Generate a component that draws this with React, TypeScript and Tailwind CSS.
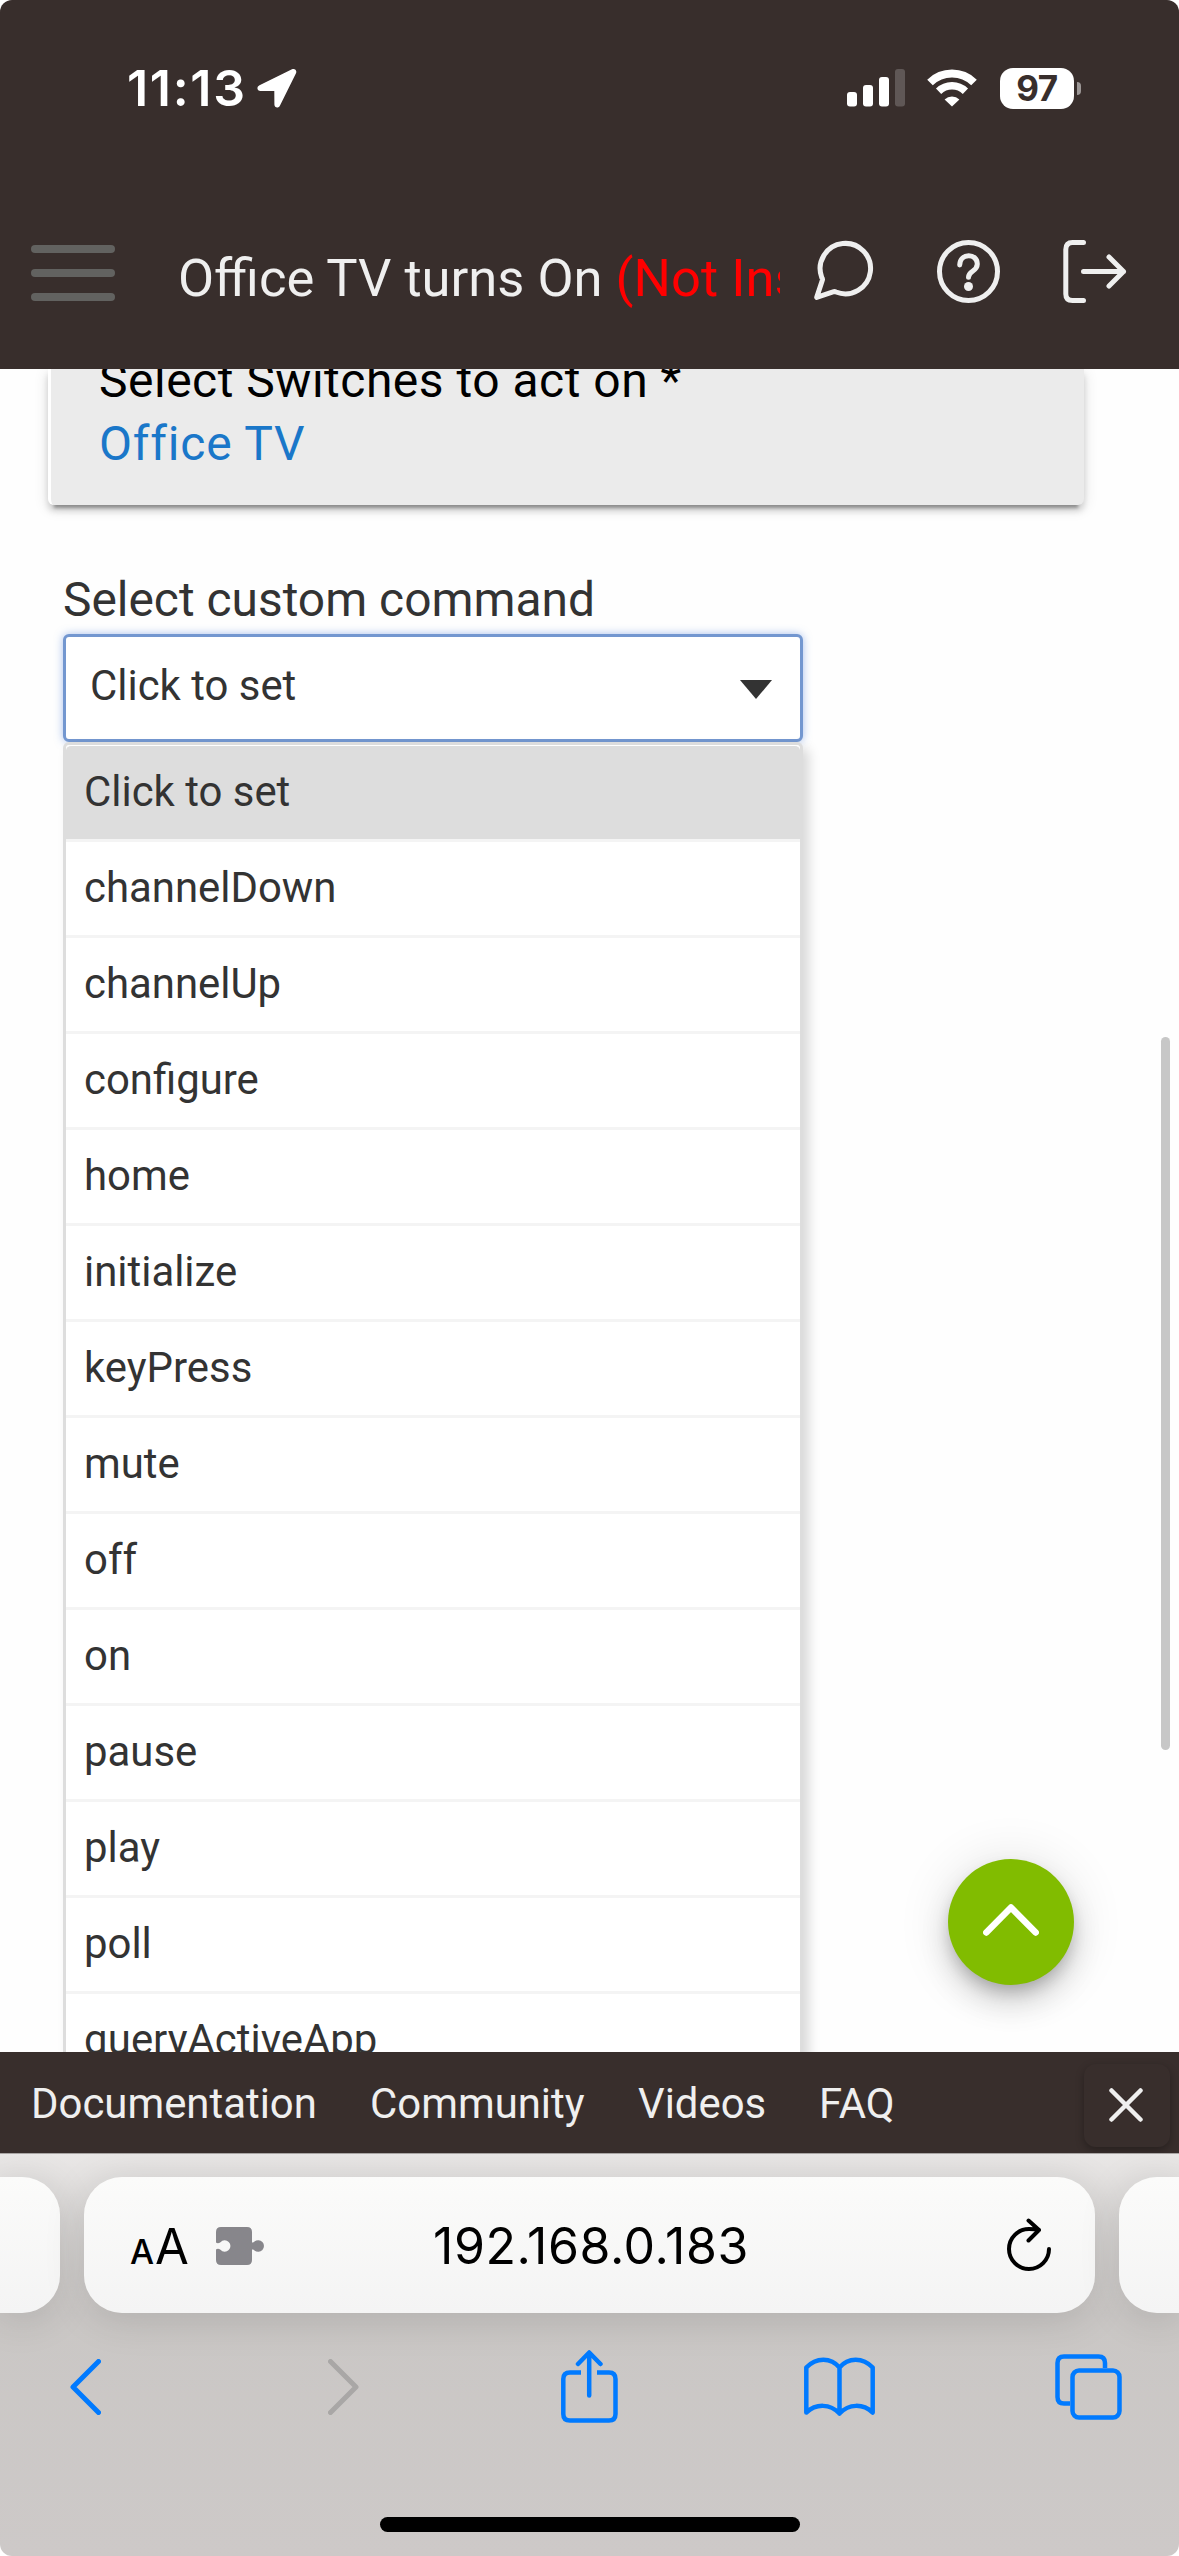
import type { ReactNode } from 'react'

const commands = [
  'Click to set',
  'channelDown',
  'channelUp',
  'configure',
  'home',
  'initialize',
  'keyPress',
  'mute',
  'off',
  'on',
  'pause',
  'play',
  'poll',
  'queryActiveApp',
]

function Icon({
  className,
  viewBox,
  strokeWidth = 5,
  children,
}: {
  className: string
  viewBox: string
  strokeWidth?: number
  children: ReactNode
}) {
  return (
    <svg
      viewBox={viewBox}
      fill="none"
      stroke="currentColor"
      strokeWidth={strokeWidth}
      strokeLinecap="round"
      strokeLinejoin="round"
      className={className}
      aria-hidden="true"
    >
      {children}
    </svg>
  )
}

function StatusBar() {
  return (
    <div className="flex h-[176px] items-center pr-[98px] pl-[127px] font-['Inter'] text-white">
      <span className="text-[50px] leading-none font-semibold tracking-[1.7px]">11:13</span>
      <svg viewBox="0 0 40 40" className="ml-[10px] size-[40px]" aria-hidden="true">
        <path
          d="M35 1.2 2.5 17.2C-.8 18.900 0 23 3.600 23L17.300 23.100 17.400 36.500C17.400 40 21.600 40.600 23 37.500L39 5.200C40.200 2.400 37.800 0 35 1.200Z"
          fill="currentColor"
        />
      </svg>
      <div className="ml-auto flex items-center">
        <svg viewBox="0 0 58 38" className="h-[38px] w-[58px]" fill="currentColor" aria-hidden="true">
          <rect x="0" y="23" width="10" height="14.500" rx="3" />
          <rect x="16" y="16" width="10" height="21.500" rx="3" />
          <rect x="32" y="8" width="10" height="29.500" rx="3" />
          <rect x="48" y="0" width="10" height="37.500" rx="3" opacity=".2" />
        </svg>
        <svg viewBox="0 0 50 38" className="ml-[22px] h-[38px] w-[50px]" aria-hidden="true">
          <path d="M3 13.500A31.500 31.500 0 0 1 47 13.500" fill="none" stroke="currentColor" strokeWidth="8" />
          <path d="M11.600 22.300A19.200 19.200 0 0 1 38.400 22.300" fill="none" stroke="currentColor" strokeWidth="7.500" />
          <path d="M25 37.500 17.600 30.400A10.600 10.600 0 0 1 32.400 30.400Z" fill="currentColor" />
        </svg>
        <div className="ml-[23px] flex h-[41px] w-[74px] items-center justify-center rounded-[13px] bg-white text-[35px] leading-none font-bold tracking-[-.4px] text-[#382e2c]">
          97
        </div>
        <span className="ml-[3px] h-[13px] w-[4px] rounded-r-full bg-white/50" />
      </div>
    </div>
  )
}

function Header() {
  return (
    <header className="h-[369px] shrink-0 bg-[#382e2c]">
      <StatusBar />
      <div className="flex h-[193px] items-start pl-[31px] text-[#efefef]">
        <button type="button" aria-label="Menu" className="mt-[69px] flex w-[84px] flex-col gap-[16px]">
          <span className="h-[8px] rounded-full bg-[#626260]" />
          <span className="h-[8px] rounded-full bg-[#626260]" />
          <span className="h-[8px] rounded-full bg-[#626260]" />
        </button>
        <h1 className="mt-[67px] ml-[63px] w-[602px] overflow-hidden text-[52.5px] leading-[70px] whitespace-nowrap">
          Office TV turns On <span className="text-[#ff0000]">(Not Installed)</span>
        </h1>
        <Icon viewBox="0 0 60 60" className="mt-[64px] ml-[34px] size-[60px]">
          <path d="M7.700 37.300A25.200 25.200 0 1 1 22 52Q20.500 51.300 19 51.900L2.700 57.400 8.400 40Q8.800 38.600 7.700 37.300Z" />
        </Icon>
        <Icon viewBox="0 0 64 64" className="mt-[64px] ml-[63px] size-[64px]">
          <circle cx="31.500" cy="31.500" r="29" />
          <path d="M22.700 25C23 12.500 40.300 13 40.300 24C40.300 31.500 31.500 31 31.500 37.200" />
          <circle cx="31.500" cy="46.500" r="4.500" fill="currentColor" stroke="none" />
        </Icon>
        <Icon viewBox="0 0 64 64" className="mt-[64px] ml-[62px] size-[64px]">
          <path d="M20.500 2.500H9.500Q2.800 2.500 2.800 9.500V54Q2.800 60.500 9.500 60.500H20.500M20.500 31.500H60.500M46 17 60.500 31.500 46 46" />
        </Icon>
      </div>
    </header>
  )
}

function CommandList() {
  return (
    <ul className="w-[740px] rounded-t-[6px] border-[3px] border-b-0 border-[#ddd] bg-white text-[41.9px] text-[#333] shadow-[6px_6px_12px_rgba(0,0,0,0.15)]">
      {commands.map((command, i) => (
        <li
          key={command}
          className={`flex items-center border-b-[3px] border-[#f4f4f4] pb-[1px] pl-[18px] ${
            i === 0 ? 'h-[97px] rounded-t-[5px] border-t border-t-white bg-[#ddd]' : 'h-[96px]'
          }`}
        >
          {command}
        </li>
      ))}
    </ul>
  )
}

function Content() {
  return (
    <main className="relative h-[1683px] shrink-0 overflow-hidden bg-[#fefefe]">
      <section className="ml-[48px] h-[136px] w-[1036px] rounded-b-[6px] border-l-[3px] border-white bg-[#ebebeb] pl-[48px] shadow-[0_6px_6px_rgba(0,0,0,0.14),0_9px_3px_-6px_rgba(0,0,0,0.3),0_3px_15px_rgba(0,0,0,0.12)]">
        <div className="-translate-y-[20px] text-[48px] leading-[63px] whitespace-nowrap">
          <p className="tracking-[.5px] text-black">Select Switches to act on *</p>
          <p className="tracking-[.8px] text-[#1a77c9]">Office TV</p>
        </div>
      </section>
      <div className="pt-[63px] pl-[63px]">
        <label className="block h-[66px] text-[47.9px] leading-[65px] text-[#333]">Select custom command</label>
        <div className="flex h-[108px] w-[740px] items-center justify-between rounded-[6px] border-[3px] border-[#7397d0] bg-white pr-[28px] pb-[4px] pl-[24px] text-[41.9px] text-[#333] shadow-[0_0_8px_rgba(80,130,220,0.5)]">
          Click to set
          <svg viewBox="0 0 32 19" className="mt-[6px] h-[19px] w-[32px]" aria-hidden="true">
            <path d="M0 0H32L16 19Z" fill="#333" />
          </svg>
        </div>
        <CommandList />
      </div>
      <span className="absolute top-[668px] right-[9px] h-[713px] w-[9px] rounded-full bg-[#c7c7c7]" />
      <button
        type="button"
        aria-label="Back to top"
        className="absolute top-[1490px] left-[948px] flex size-[126px] items-center justify-center rounded-full bg-[#81bc00] text-white shadow-[0_9px_15px_-3px_rgba(0,0,0,0.2),0_18px_30px_rgba(0,0,0,0.14),0_3px_54px_rgba(0,0,0,0.12)]"
      >
        <Icon viewBox="0 0 56 32" strokeWidth={6.5} className="-mt-[5px] h-[32px] w-[56px]">
          <path d="M3.300 28.500 28 3.500 52.700 28.500" />
        </Icon>
      </button>
    </main>
  )
}

function FooterLinks() {
  return (
    <nav className="flex h-[101px] shrink-0 items-center bg-[#382e2c] pt-[3px] pl-[31px] text-[41.9px] text-[#efefef]">
      <span className="w-[339px]">Documentation</span>
      <span className="w-[268px]">Community</span>
      <span className="w-[181px]">Videos</span>
      <span>FAQ</span>
      <button
        type="button"
        aria-label="Close"
        className="mt-[3px] mr-[9px] ml-auto flex h-[83px] w-[86px] items-center justify-center rounded-[12px] pr-[2px] pb-[2px] shadow-[0_3px_9px_rgba(0,0,0,0.3)]"
      >
        <Icon viewBox="0 0 34 34" strokeWidth={4.500} className="size-[34px]">
          <path d="M2.500 2.500 31.500 31.500M31.500 2.500 2.500 31.500" />
        </Icon>
      </button>
    </nav>
  )
}

function BrowserBar() {
  return (
    <footer className="h-[403px] overflow-hidden border-t border-[#a9a5a4] bg-linear-to-b from-[#e9e7e6] via-[#cac7c5] via-40% to-[#cdc9c8] pt-[23px] font-['Inter']">
      <div className="flex h-[136px] gap-[24px]">
        <div className="w-[60px] shrink-0 rounded-r-[38px] bg-linear-to-b from-[#fbfbfa] to-[#f4f4f4] shadow-[0_6px_40px_rgba(0,0,0,0.13)]" />
        <div className="flex w-[1011px] shrink-0 items-center rounded-[38px] bg-linear-to-b from-[#fbfbfa] to-[#f4f4f4] pt-[2px] pr-[44px] pl-[46px] text-black shadow-[0_6px_40px_rgba(0,0,0,0.13)]">
          <div className="flex w-[60px] items-baseline gap-[1px] leading-none">
            <span className="text-[34px] font-medium">A</span>
            <span className="text-[49px]">A</span>
          </div>
          <svg viewBox="0 0 48 38" className="ml-[26px] h-[38px] w-[48px]" aria-hidden="true">
            <path
              d="M5 0H31Q36 0 36 5V15.500Q37.500 15.800 38.500 14.500A5.800 5.800 0 1 1 38.500 23.500Q37.500 22 36 22.500V33Q36 38 31 38H5Q0 38 0 33V22.500Q2 20.800 4.500 22.800A5.700 5.700 0 1 0 4.500 15.200Q2 17 0 15.500V5Q0 0 5 0Z"
              fill="#87868b"
            />
          </svg>
          <span className="ml-[169px] text-[50px] tracking-[.55px]">192.168.0.183</span>
          <Icon viewBox="0 0 44 54" strokeWidth={4} className="mb-[2px] ml-auto h-[54px] w-[44px]">
            <path d="M42 31A20 20 0 1 1 22 11Q28 11 32 12M21.500 2.500 32 12 21.500 22.500" />
          </Icon>
        </div>
        <div className="w-[60px] shrink-0 rounded-l-[38px] bg-linear-to-b from-[#fbfbfa] to-[#f4f4f4] shadow-[0_6px_40px_rgba(0,0,0,0.13)]" />
      </div>
      <div className="mt-[35px] flex h-[78px] items-center pl-[70px] text-[#007aff]">
        <Icon viewBox="0 0 31 56" className="h-[56px] w-[31px]">
          <path d="M28.500 2.500 3 28 28.500 53.500" />
        </Icon>
        <Icon viewBox="0 0 31 56" className="ml-[227px] h-[56px] w-[31px] text-[#a9a7a6]">
          <path d="M2.500 2.500 28 28 2.500 53.500" />
        </Icon>
        <Icon viewBox="0 0 57 73" strokeWidth={4.500} className="mb-[2px] ml-[202px] h-[73px] w-[57px]">
          <path
            d="M20 22.500H9Q2.300 22.500 2.300 29V64Q2.300 70.500 9 70.500H48Q54.500 70.500 54.500 64V29Q54.500 22.500 48 22.500H36"
            strokeLinecap="butt"
          />
          <path d="M28.200 45.500V3M17 14 28.200 2.500 39.500 14" />
        </Icon>
        <Icon viewBox="0 0 72 60" strokeWidth={4.500} className="ml-[186px] h-[60px] w-[72px]">
          <path d="M35.500 10.500C27 0 12 0 2.300 10.500V55.500C12 46.500 26 46.500 35.500 56.500C45 46.500 59 46.500 68.700 55.500V10.500C59 0 44 0 35.500 10.500ZM35.500 10.500V56.500" />
        </Icon>
        <Icon viewBox="0 0 67 66" strokeWidth={4.500} className="ml-[179px] h-[66px] w-[67px]">
          <path d="M50 14V9Q50 2.500 43.500 2.500H9Q2.500 2.500 2.500 9V43Q2.500 49.500 9 49.500H15" strokeLinecap="butt" />
          <rect x="17.500" y="16.500" width="47" height="47" rx="6.500" />
        </Icon>
      </div>
      <div className="mx-auto mt-[91px] h-[15px] w-[420px] rounded-full bg-black" />
    </footer>
  )
}

export default function App() {
  return (
    <div className="bg-white">
      <div className="flex h-[2556px] w-[1179px] flex-col overflow-hidden rounded-[12px] font-['Roboto']">
        <Header />
        <Content />
        <FooterLinks />
        <BrowserBar />
      </div>
    </div>
  )
}
